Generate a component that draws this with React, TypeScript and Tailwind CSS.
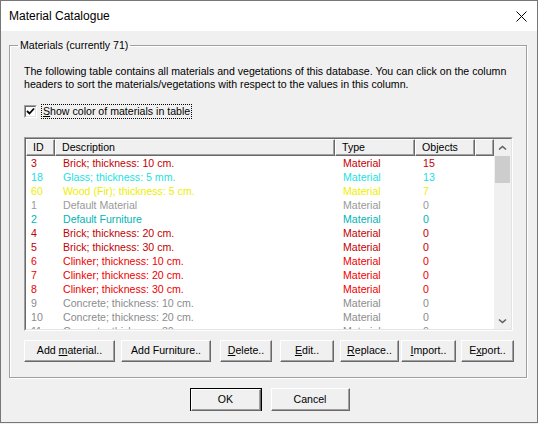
import React from "react";

type Row = { id: string; desc: string; type: string; n: string; color: string };

// colours as read from the list: each material keeps its own display colour
const rows: Row[] = [
  { id: "3", desc: "Brick; thickness: 10 cm.", type: "Material", n: "15", color: "text-[#c40000]" },
  { id: "18", desc: "Glass; thickness: 5 mm.", type: "Material", n: "13", color: "text-[#22e2e2]" },
  { id: "60", desc: "Wood (Fir); thickness: 5 cm.", type: "Material", n: "7", color: "text-[#eeee00]" },
  { id: "1", desc: "Default Material", type: "Material", n: "0", color: "text-[#999999]" },
  { id: "2", desc: "Default Furniture", type: "Material", n: "0", color: "text-[#00b4b4]" },
  { id: "4", desc: "Brick; thickness: 20 cm.", type: "Material", n: "0", color: "text-[#c40000]" },
  { id: "5", desc: "Brick; thickness: 30 cm.", type: "Material", n: "0", color: "text-[#c40000]" },
  { id: "6", desc: "Clinker; thickness: 10 cm.", type: "Material", n: "0", color: "text-[#ee0000]" },
  { id: "7", desc: "Clinker; thickness: 20 cm.", type: "Material", n: "0", color: "text-[#ee0000]" },
  { id: "8", desc: "Clinker; thickness: 30 cm.", type: "Material", n: "0", color: "text-[#ee0000]" },
  { id: "9", desc: "Concrete; thickness: 10 cm.", type: "Material", n: "0", color: "text-[#8c8c8c]" },
  { id: "10", desc: "Concrete; thickness: 20 cm.", type: "Material", n: "0", color: "text-[#8c8c8c]" },
  { id: "11", desc: "Concrete; thickness: 30 cm.", type: "Material", n: "0", color: "text-[#8c8c8c]" },
];

const btn =
  "h-[22px] bg-[#f0f0f0] border border-t-white border-l-white border-r-[#696969] border-b-[#696969] shadow-[inset_-1px_-1px_0_#a0a0a0] flex items-center justify-center text-[10.6px] text-black";

const head =
  "h-full border border-t-white border-l-white border-r-[#696969] border-b-[#696969] shadow-[inset_-1px_-1px_0_#a0a0a0] flex items-center pl-[6px]";

function Chevron({ down }: { down?: boolean }) {
  return (
    <svg width="9" height="6" viewBox="0 0 9 6">
      <path
        d={down ? "M1 1.5 L4.5 4.5 L8 1.5" : "M1 4.5 L4.5 1.5 L8 4.5"}
        fill="none"
        stroke="#606060"
        strokeWidth="1.6"
      />
    </svg>
  );
}

export default function App() {
  return (
    <div className="w-[538px] h-[424px] bg-[#f0f0f0] font-['Liberation_Sans',Arial,sans-serif] text-black">
      <div className="w-[538px] h-[423px] border border-[#777777] flex flex-col bg-[#f0f0f0]">
        {/* title bar */}
        <div className="h-[30px] bg-white flex items-center justify-between pl-[8px] pr-[10px]">
          <span className="text-[12px]">Material Catalogue</span>
          <svg width="11" height="11" viewBox="0 0 11 11">
            <path d="M0.5 0.5 L10.5 10.5 M10.5 0.5 L0.5 10.5" stroke="#000" strokeWidth="1" />
          </svg>
        </div>

        <div className="pl-[8px]">
          <fieldset className="mt-[7px] w-[517px] border border-[#a0a0a0] shadow-[1px_1px_0_#fff,inset_1px_1px_0_#fff] pl-[14px] pr-[12px] pb-[15px]">
            <legend className="ml-[-6px] px-[2px] text-[10.6px] leading-[14px]">Materials (currently 71)</legend>

            <p className="mt-[13px] text-[10.6px] leading-[13px]">
              The following table contains all materials and vegetations of this database. You can click on the column
              headers to sort the materials/vegetations with respect to the values in this column.
            </p>

            <div className="mt-[12px] h-[16px] flex items-center">
              <div className="w-[13px] h-[13px] border border-t-[#a0a0a0] border-l-[#a0a0a0] border-r-white border-b-white">
                <div className="w-full h-full bg-white border border-t-[#696969] border-l-[#696969] border-r-[#e3e3e3] border-b-[#e3e3e3] flex items-center justify-center">
                  <svg width="9" height="9" viewBox="0 0 9 9">
                    <path d="M1 4 L3.5 6.5 L8 1.5" fill="none" stroke="#000" strokeWidth="1.8" />
                  </svg>
                </div>
              </div>
              <span className="ml-[4px] border border-dotted border-black px-[1px] text-[10.6px] leading-[13px]">
                <u className="underline-offset-[1px]">S</u>how color of materials in table
              </span>
            </div>

            {/* list view */}
            <div className="mt-[18px] w-[489px] h-[194px] border border-t-[#a0a0a0] border-l-[#a0a0a0] border-r-white border-b-white">
              <div className="h-full flex bg-white border border-t-[#696969] border-l-[#696969] border-r-[#e3e3e3] border-b-[#e3e3e3]">
                <div className="flex-1 flex flex-col overflow-hidden">
                  <div className="h-[17px] shrink-0 flex bg-[#f0f0f0] text-[10.6px]">
                    <div className={`w-[29px] ${head}`}>ID</div>
                    <div className={`w-[280px] ${head}`}>Description</div>
                    <div className={`w-[80px] ${head}`}>Type</div>
                    <div className={`w-[60px] ${head}`}>Objects</div>
                    <div className={`flex-1 ${head}`} />
                  </div>
                  <div className="pt-[1px]">
                    {rows.map((r) => (
                      <div key={r.id} className={`h-[14px] flex items-center text-[10.6px] ${r.color}`}>
                        <div className="w-[29px] pl-[5px]">{r.id}</div>
                        <div className="w-[280px] pl-[8px]">{r.desc}</div>
                        <div className="w-[80px] pl-[8px]">{r.type}</div>
                        <div className="w-[60px] pl-[8px]">{r.n}</div>
                      </div>
                    ))}
                  </div>
                </div>
                {/* scrollbar */}
                <div className="w-[17px] bg-[#f0f0f0] flex flex-col">
                  <div className="h-[17px] flex items-center justify-center">
                    <Chevron />
                  </div>
                  <div className="h-[27px] mx-[1px] bg-[#cdcdcd]" />
                  <div className="flex-1" />
                  <div className="h-[17px] flex items-center justify-center">
                    <Chevron down />
                  </div>
                </div>
              </div>
            </div>

            <div className="mt-[9px] flex">
              <button className={`w-[91px] ${btn}`}>
                <span>
                  Add <u className="underline-offset-[1px]">m</u>aterial..
                </span>
              </button>
              <button className={`ml-[6px] w-[90px] ${btn}`}>
                <span>Add Furniture..</span>
              </button>
              <button className={`ml-[9px] w-[52px] ${btn}`}>
                <span>
                  <u className="underline-offset-[1px]">D</u>elete..
                </span>
              </button>
              <button className={`ml-[8px] w-[54px] ${btn}`}>
                <span>
                  <u className="underline-offset-[1px]">E</u>dit..
                </span>
              </button>
              <button className={`ml-[6px] w-[59px] ${btn}`}>
                <span>
                  <u className="underline-offset-[1px]">R</u>eplace..
                </span>
              </button>
              <button className={`ml-[2px] w-[55px] ${btn}`}>
                <span>
                  <u className="underline-offset-[1px]">I</u>mport..
                </span>
              </button>
              <button className={`ml-[5px] w-[53px] ${btn}`}>
                <span>
                  E<u className="underline-offset-[1px]">x</u>port..
                </span>
              </button>
            </div>
          </fieldset>
        </div>

        <div className="mt-[10px] flex justify-center gap-[9px] pl-[1px]">
          <div className="w-[72px] h-[23px] border border-black">
            <button className={`w-full h-[21px] ${btn}`}>OK</button>
          </div>
          <button className={`w-[79px] h-[23px] ${btn}`}>Cancel</button>
        </div>
      </div>
    </div>
  );
}
